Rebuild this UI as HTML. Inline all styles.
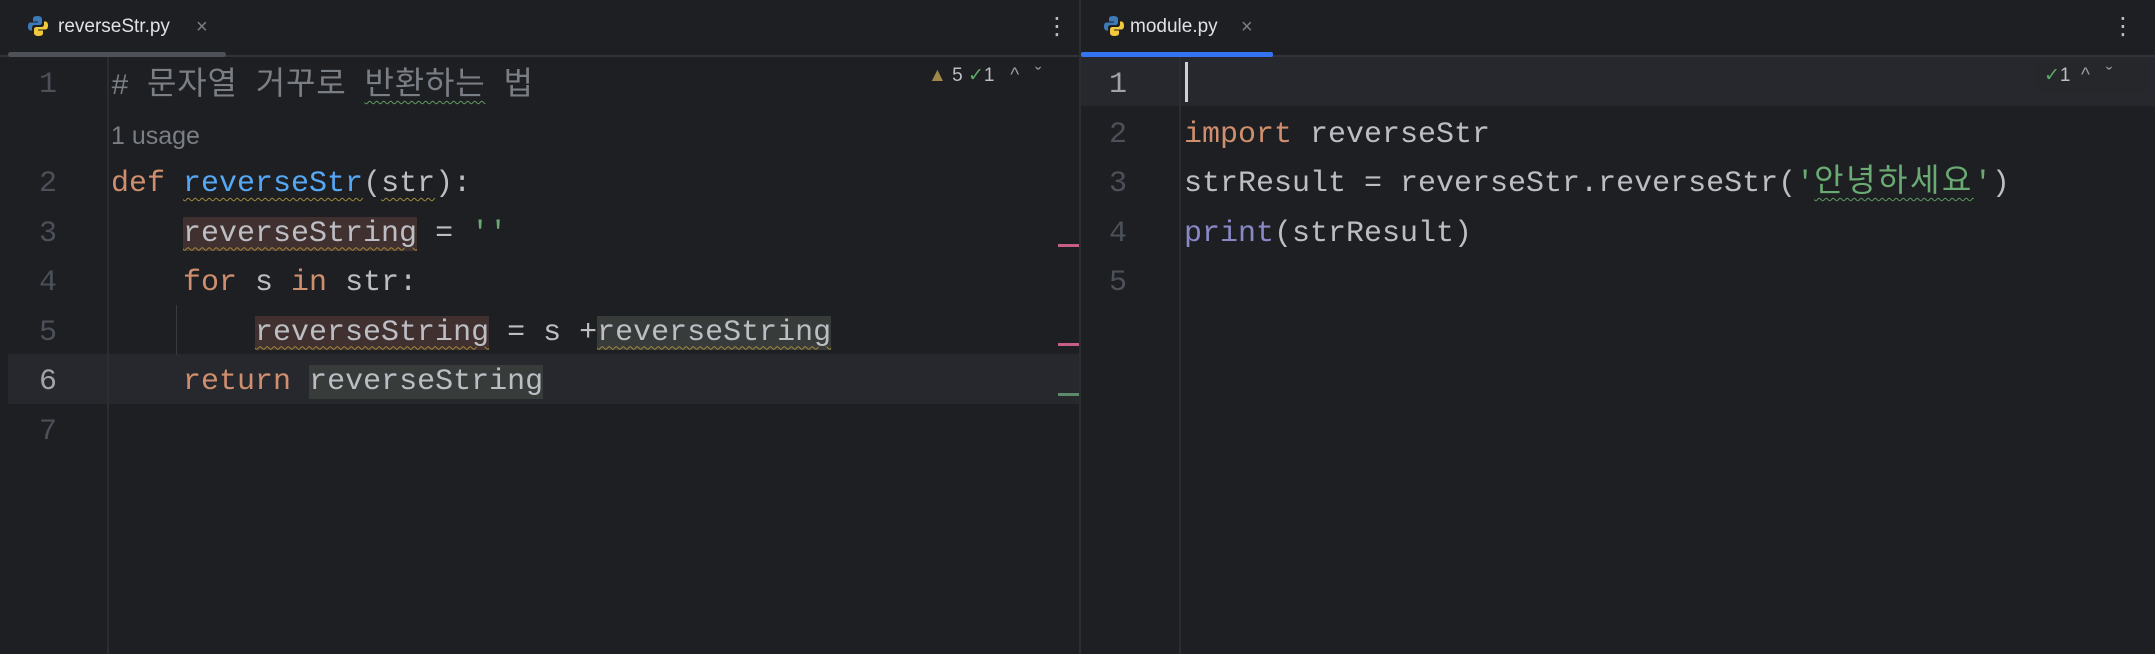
<!DOCTYPE html>
<html><head><meta charset="utf-8"><style>
body{margin:0;width:2155px;height:654px;background:#1e1f22;overflow:hidden;position:relative;font-family:"Liberation Mono","Noto Sans CJK KR",monospace;}
.abs{position:absolute}
.code{position:absolute;font-size:30px;line-height:49.5px;height:49.5px;color:#bcbec4;white-space:pre;margin-top:4px}
.ln{position:absolute;font-size:30px;line-height:49.5px;color:#4b5059;width:60px;text-align:center;margin-top:4px}
.kw{color:#cf8e6d}.fn{color:#56a8f5}.st{color:#6aab73}.cm{color:#7a7e85}.bi{color:#8888c6}
.wy{text-decoration:underline wavy #a38a3a;text-decoration-thickness:1px;text-underline-offset:6px}
.wg{text-decoration:underline wavy #5f9a62;text-decoration-thickness:1px;text-underline-offset:6px}
.wr{background:#40302f}.rd{background:#373b39}
.k{font-family:"Noto Sans CJK KR",sans-serif;font-size:32px;letter-spacing:2.5px;line-height:0}
.cm .k{letter-spacing:0.8px}
.tab{position:absolute;top:16px;font-family:"Liberation Sans",sans-serif;font-size:19px;color:#dfe1e5}
</style></head><body>
<div class="abs" style="left:0;top:55px;width:2155px;height:2px;background:#313337"></div>
<div class="abs" style="left:1079px;top:0;width:2px;height:654px;background:#2b2d30"></div>
<div class="abs" style="left:8px;top:52px;width:218px;height:5px;border-radius:3px;background:#4e5157"></div>
<div class="abs" style="left:1081px;top:52px;width:192px;height:5px;border-radius:2px;background:#3574f0"></div>
<svg class="abs" style="left:27px;top:15px" width="22" height="22" viewBox="0 0 22 22"><path d="M10.5 1C6 1 6 3 6 4v2.5h5V7.5H3.5C1.5 7.5 1 9.5 1 11.5s.8 4 2.5 4H5v-3c0-1.5 1.3-2.5 2.5-2.5h5c1.3 0 2.5-1 2.5-2.5V4c0-2-2-3-4.5-3z" fill="#3d7ab8"/><path d="M11.5 21c4.5 0 4.5-2 4.5-3v-2.5h-5v-1h7.5c2 0 2.5-2 2.5-4s-.8-4-2.5-4H17v3c0 1.5-1.3 2.5-2.5 2.5h-5C8.2 12 7 13 7 14.5V18c0 2 2 3 4.5 3z" fill="#f2c83c"/></svg>
<div class="tab" style="left:58px">reverseStr.py</div>
<div class="tab" style="left:196px;color:#7a7e85;font-size:20px">×</div>
<div class="abs" style="left:1045px;top:12px;color:#bcbec4;font-size:24px;font-family:'DejaVu Sans'">⋮</div>
<svg class="abs" style="left:1103px;top:15px" width="22" height="22" viewBox="0 0 22 22"><path d="M10.5 1C6 1 6 3 6 4v2.5h5V7.5H3.5C1.5 7.5 1 9.5 1 11.5s.8 4 2.5 4H5v-3c0-1.5 1.3-2.5 2.5-2.5h5c1.3 0 2.5-1 2.5-2.5V4c0-2-2-3-4.5-3z" fill="#3d7ab8"/><path d="M11.5 21c4.5 0 4.5-2 4.5-3v-2.5h-5v-1h7.5c2 0 2.5-2 2.5-4s-.8-4-2.5-4H17v3c0 1.5-1.3 2.5-2.5 2.5h-5C8.2 12 7 13 7 14.5V18c0 2 2 3 4.5 3z" fill="#f2c83c"/></svg>
<div class="tab" style="left:1130px">module.py</div>
<div class="tab" style="left:1241px;color:#7a7e85;font-size:20px">×</div>
<div class="abs" style="left:2111px;top:12px;color:#bcbec4;font-size:24px;font-family:'DejaVu Sans'">⋮</div>

<div class="abs" style="left:8px;top:354px;width:1071px;height:50px;background:#26282e"></div>
<div class="abs" style="left:107px;top:57px;width:2px;height:597px;background:#2b2d30"></div>
<div class="abs" style="left:176px;top:305px;width:1px;height:50px;background:#393b40"></div>
<div class="ln" style="left:18px;top:57px">1</div>
<div class="ln" style="left:18px;top:156px">2</div>
<div class="ln" style="left:18px;top:205.5px">3</div>
<div class="ln" style="left:18px;top:255px">4</div>
<div class="ln" style="left:18px;top:304.5px">5</div>
<div class="ln" style="left:18px;top:354px;color:#a1a3ab">6</div>
<div class="ln" style="left:18px;top:403.5px">7</div>
<div class="code cm" style="left:111px;top:59px"># <span class="k">문자열</span> <span class="k">거꾸로</span> <span class="k wg">반환하는</span> <span class="k">법</span></div>
<div class="code" style="left:111px;top:112px;font-family:'Liberation Sans';font-size:25px;line-height:40px;color:#7a7e85">1 usage</div>
<div class="code" style="left:111px;top:156px"><span class="kw">def</span> <span class="fn wy">reverseStr</span>(<span class="wy">str</span>):</div>
<div class="code" style="left:111px;top:205.5px">    <span class="wr wy">reverseString</span> = <span class="st">''</span></div>
<div class="code" style="left:111px;top:255px">    <span class="kw">for</span> s <span class="kw">in</span> str:</div>
<div class="code" style="left:111px;top:304.5px">        <span class="wr wy">reverseString</span> = s +<span class="rd wy">reverseString</span></div>
<div class="code" style="left:111px;top:354px">    <span class="kw">return</span> <span class="rd">reverseString</span></div>
<div class="abs" style="left:928px;top:64px;font-family:'Liberation Sans';font-size:19px;color:#bcbec4;white-space:pre"><span style="color:#a08849">▲</span> 5 <span style="color:#5fa865">✓</span>1  &nbsp;<span style="color:#9a9ca3">^</span> &nbsp; <span style="color:#9a9ca3">ˇ</span></div>
<div class="abs" style="left:1058px;top:244px;width:21px;height:3px;background:#c75e88"></div>
<div class="abs" style="left:1058px;top:343px;width:21px;height:3px;background:#c75e88"></div>
<div class="abs" style="left:1058px;top:393px;width:21px;height:3px;background:#5c8a6a"></div>

<div class="abs" style="left:1081px;top:57px;width:1074px;height:49px;background:#26282e"></div>
<div class="abs" style="left:1179px;top:57px;width:2px;height:597px;background:#2b2d30"></div>
<div class="abs" style="left:1185px;top:62px;width:3px;height:40px;background:#ced0d6"></div>
<div class="ln" style="left:1088px;top:57px;color:#a1a3ab">1</div>
<div class="ln" style="left:1088px;top:106.5px">2</div>
<div class="ln" style="left:1088px;top:156px">3</div>
<div class="ln" style="left:1088px;top:205.5px">4</div>
<div class="ln" style="left:1088px;top:255px">5</div>
<div class="code" style="left:1184px;top:106.5px"><span class="kw">import</span> reverseStr</div>
<div class="code" style="left:1184px;top:156px">strResult = reverseStr.reverseStr(<span class="st">'<span class="k wg">안녕하세요</span>'</span>)</div>
<div class="code" style="left:1184px;top:205.5px"><span class="bi">print</span>(strResult)</div>
<div class="abs" style="left:2034px;top:60px;width:114px;height:33px;background:#25272b;border-radius:4px"></div>
<div class="abs" style="left:2044px;top:64px;font-family:'Liberation Sans';font-size:19px;color:#bcbec4;white-space:pre"><span style="color:#5fa865">✓</span>1 &nbsp;<span style="color:#9a9ca3">^</span> &nbsp; <span style="color:#9a9ca3">ˇ</span></div>
</body></html>
